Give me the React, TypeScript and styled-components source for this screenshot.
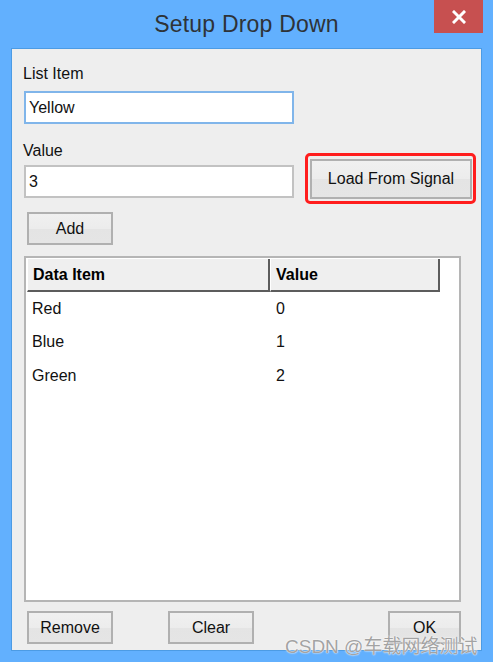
import styled, { createGlobalStyle } from 'styled-components';

interface DataRow {
  name: string;
  value: string;
}

const rows: DataRow[] = [
  { name: 'Red', value: '0' },
  { name: 'Blue', value: '1' },
  { name: 'Green', value: '2' }
];

const App = () => {
  return (
    <>
      <GlobalStyle />
      <Window>
        <TitleBar>
          <Title>Setup Drop Down</Title>
          <CloseButton aria-label="Close">
            <svg width="14" height="14" viewBox="0 0 14 14">
              <path d="M2 2 L12 12 M12 2 L2 12" stroke="#fff" strokeWidth="3" strokeLinecap="square" />
            </svg>
          </CloseButton>
        </TitleBar>
        <Panel>
          <Label>List Item</Label>
          <TextBox value="Yellow" readOnly $focused />
          <FieldRow>
            <Field>
              <Label>Value</Label>
              <TextBox value="3" readOnly />
            </Field>
            <Highlight>
              <Button $width={162} $height={40}>Load From Signal</Button>
            </Highlight>
          </FieldRow>
          <AddRow>
            <Button $width={86}>Add</Button>
          </AddRow>
          <ListView>
            <HeaderRow>
              <HeaderCell $width={243}>Data Item</HeaderCell>
              <HeaderCell $width={170}>Value</HeaderCell>
            </HeaderRow>
            {rows.map((row, index) => (
              <Row key={index}>
                <NameCell>{row.name}</NameCell>
                <ValueCell>{row.value}</ValueCell>
              </Row>
            ))}
          </ListView>
          <Footer>
            <Button $width={86}>Remove</Button>
            <Button $width={86}>Clear</Button>
            <Spacer />
            <Button $width={73}>OK</Button>
          </Footer>
        </Panel>
        <Watermark>CSDN @车载网络测试</Watermark>
      </Window>
    </>
  );
};

const GlobalStyle = createGlobalStyle`
  html, body {
    margin: 0;
    padding: 0;
    background: #62b0fe;
  }
  body {
    font-family: "Liberation Sans", Arial, sans-serif;
  }
`;

const Window = styled.div`
  position: relative;
  width: 493px;
  height: 662px;
  background: #62b0fe;
  display: flex;
  flex-direction: column;
  box-sizing: border-box;
  overflow: hidden;
`;

const TitleBar = styled.div`
  position: relative;
  height: 48px;
  display: flex;
  align-items: center;
  justify-content: center;
`;

const Title = styled.div`
  font-size: 23px;
  color: #2e3338;
  letter-spacing: 0.2px;
  margin-top: 1px;
`;

const CloseButton = styled.div`
  position: absolute;
  top: 0;
  right: 10px;
  width: 49px;
  height: 33px;
  background: #c75050;
  display: flex;
  align-items: center;
  justify-content: center;
`;

const Panel = styled.div`
  margin: 0 11px;
  height: 603px;
  box-sizing: border-box;
  background: #eeeeee;
  border: 1px solid #4c9be4;
  padding: 15px 12px 0 12px;
  display: flex;
  flex-direction: column;
`;

const Label = styled.div`
  font-size: 16px;
  line-height: 20px;
  height: 20px;
  color: #111;
  margin-left: -1px;
`;

const TextBox = styled.input<{ $focused?: boolean }>`
  box-sizing: border-box;
  width: 270px;
  height: 33px;
  margin: 7px 0 0;
  padding: 0 3px;
  font-family: "Liberation Sans", Arial, sans-serif;
  font-size: 16px;
  color: #111;
  background: #fff;
  border: 2px solid ${({ $focused }) => ($focused ? '#80b5ea' : '#c2c2c2')};
  outline: none;
`;

const FieldRow = styled.div`
  display: flex;
  margin-top: 17px;
`;

const Field = styled.div`
  display: flex;
  flex-direction: column;
  & > input {
    margin-top: 4px;
  }
`;

const Highlight = styled.div`
  margin: 12px 0 0 11px;
  border: 3px solid #ff1d1d;
  border-radius: 5px;
  padding: 3px 1px 2px 2px;
  display: flex;
`;

const Button = styled.div<{ $width: number; $height?: number }>`
  box-sizing: border-box;
  width: ${({ $width }) => $width}px;
  height: ${({ $height }) => $height ?? 33}px;
  border: 2px solid #b0b0b0;
  background: linear-gradient(#f0f0f0 0%, #ececec 50%, #e4e4e4 51%, #e5e5e5 100%);
  display: flex;
  align-items: center;
  justify-content: center;
  font-size: 16px;
  color: #111;
`;

const AddRow = styled.div`
  display: flex;
  margin: 8px 0 0 3px;
`;

const ListView = styled.div`
  box-sizing: border-box;
  width: 437px;
  height: 346px;
  margin-top: 11px;
  background: #fff;
  border: 2px solid #b5b5b5;
  padding: 1px;
`;

const HeaderRow = styled.div`
  display: flex;
  height: 33px;
`;

const HeaderCell = styled.div<{ $width: number }>`
  box-sizing: border-box;
  width: ${({ $width }) => $width}px;
  height: 33px;
  padding-left: 5px;
  display: flex;
  align-items: center;
  font-size: 16px;
  font-weight: bold;
  color: #000;
  background: #efefef;
  border-left: 1px solid #ffffff;
  border-right: 2px solid #5c5c5c;
  border-bottom: 2px solid #5c5c5c;
`;

const Row = styled.div`
  display: flex;
  height: 33.5px;
  align-items: center;
  font-size: 16px;
  color: #111;
  &:first-of-type {
    margin-top: -1px;
  }
`;

const NameCell = styled.div`
  width: 243px;
  padding-left: 5px;
  box-sizing: border-box;
`;

const ValueCell = styled.div`
  padding-left: 6px;
`;

const Footer = styled.div`
  display: flex;
  gap: 55px;
  margin: 9px 0 0 3px;
  width: 434px;
`;

const Spacer = styled.div`
  flex: 1;
`;

const Watermark = styled.div`
  position: absolute;
  left: 285px;
  top: 631px;
  font-family: "Liberation Sans", "Noto Sans CJK SC", sans-serif;
  font-size: 19px;
  color: #a3a3a3;
  text-shadow: 0 0 2px #ffffff, 0 0 1px #ffffff;
  white-space: nowrap;
`;

export default App;
